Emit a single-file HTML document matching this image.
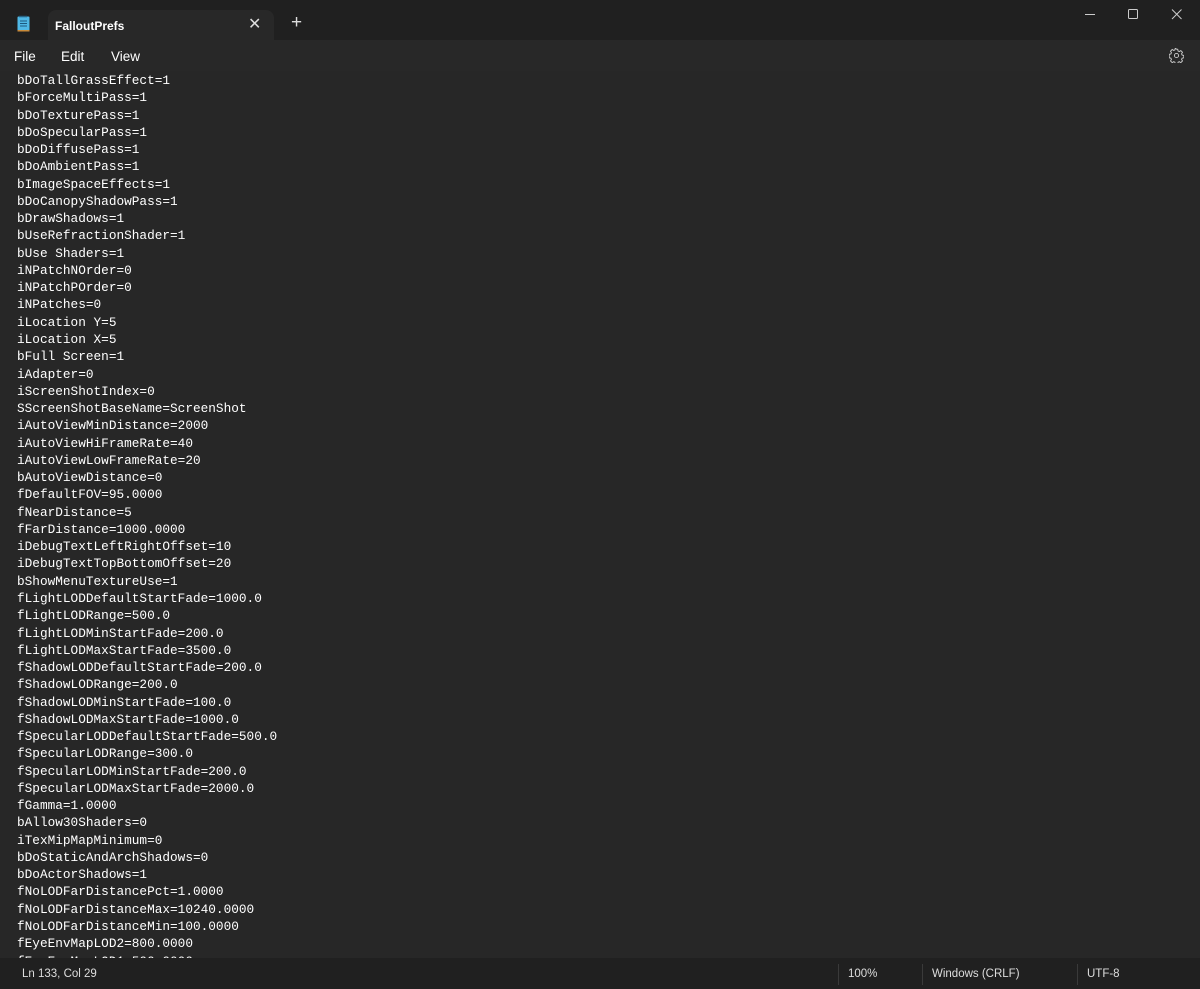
<!DOCTYPE html>
<html><head><meta charset="utf-8"><style>
*{margin:0;padding:0;box-sizing:border-box}
html,body{width:1200px;height:989px;overflow:hidden;background:#202020;font-family:"Liberation Sans",sans-serif;color:#fff}
.title{position:absolute;left:0;top:0;width:1200px;height:40px;background:#202020}
.tab{position:absolute;left:48px;top:10px;width:226px;height:30px;background:#282828;border-radius:8px 8px 0 0}
.tab .t{position:absolute;left:7px;top:9px;font-size:12px;font-weight:bold;color:#fff}
.tab .x{position:absolute;left:200px;top:4px;font-size:16px;color:#ddd}
.plus{position:absolute;left:291px;top:13px;font-size:19px;color:#ddd;line-height:1}
.menu{position:absolute;left:0;top:40px;width:1200px;height:31px;background:#282828}
.menu span{position:absolute;top:9px;font-size:13.5px;color:#fff}
.ed{position:absolute;left:0;top:71px;width:1200px;height:887px;background:#272727;overflow:hidden}
pre{position:absolute;left:17px;top:1px;font-family:"Liberation Mono",monospace;font-size:12.75px;line-height:17.26px;color:#fff}
.status{position:absolute;left:0;top:958px;width:1200px;height:31px;background:#202020;font-size:11.5px;color:#ddd}
.status span{position:absolute;top:10px}
.sep{position:absolute;top:6px;width:1px;height:21px;background:#3a3a3a}
</style></head><body>
<div class="title">
<svg style="position:absolute;left:17px;top:15px" width="13" height="17" viewBox="0 0 13 17"><rect x="0.5" y="1.5" width="12" height="15" rx="1" fill="#4fb8e6"/><rect x="0.5" y="15" width="12" height="1.5" fill="#c88a3a"/><path d="M3 0.5v2M5 0.5v2M7 0.5v2M9 0.5v2" stroke="#1d5a80"/><path d="M3 6h7M3 8.5h7M3 11h7" stroke="#1d5a80"/></svg>
<div class="tab"><span class="t">FalloutPrefs</span><span class="x">✕</span></div>
<span class="plus">+</span>
<svg style="position:absolute;left:1085px;top:9px" width="110" height="11"><path d="M0 5.5h10" stroke="#ccc"/><rect x="43.5" y="0.5" width="9" height="9" rx="1" fill="none" stroke="#ccc"/><path d="M87 0.5l9.5 9.5M96.5 0.5l-9.5 9.5" stroke="#ccc"/></svg>
</div>
<div class="menu"><span style="left:14px">File</span><span style="left:61px">Edit</span><span style="left:111px">View</span>
<svg style="position:absolute;left:1169px;top:8px" width="15" height="15" viewBox="0 0 16 16"><path d="M8 1.2l1.3.2.4 1.8 1.3.6 1.6-1 1.8 1.8-1 1.6.6 1.3 1.8.4v2.6l-1.8.4-.6 1.3 1 1.6-1.8 1.8-1.6-1-1.3.6-.4 1.8H6.7l-.4-1.8-1.3-.6-1.6 1-1.8-1.8 1-1.6-.6-1.3-1.8-.4V6.7l1.8-.4.6-1.3-1-1.6 1.8-1.8 1.6 1 1.3-.6.4-1.8z" fill="none" stroke="#ccc"/><circle cx="8" cy="8" r="2.2" fill="none" stroke="#ccc"/></svg></div>
<div class="ed"><pre>bDoTallGrassEffect=1
bForceMultiPass=1
bDoTexturePass=1
bDoSpecularPass=1
bDoDiffusePass=1
bDoAmbientPass=1
bImageSpaceEffects=1
bDoCanopyShadowPass=1
bDrawShadows=1
bUseRefractionShader=1
bUse Shaders=1
iNPatchNOrder=0
iNPatchPOrder=0
iNPatches=0
iLocation Y=5
iLocation X=5
bFull Screen=1
iAdapter=0
iScreenShotIndex=0
SScreenShotBaseName=ScreenShot
iAutoViewMinDistance=2000
iAutoViewHiFrameRate=40
iAutoViewLowFrameRate=20
bAutoViewDistance=0
fDefaultFOV=95.0000
fNearDistance=5
fFarDistance=1000.0000
iDebugTextLeftRightOffset=10
iDebugTextTopBottomOffset=20
bShowMenuTextureUse=1
fLightLODDefaultStartFade=1000.0
fLightLODRange=500.0
fLightLODMinStartFade=200.0
fLightLODMaxStartFade=3500.0
fShadowLODDefaultStartFade=200.0
fShadowLODRange=200.0
fShadowLODMinStartFade=100.0
fShadowLODMaxStartFade=1000.0
fSpecularLODDefaultStartFade=500.0
fSpecularLODRange=300.0
fSpecularLODMinStartFade=200.0
fSpecularLODMaxStartFade=2000.0
fGamma=1.0000
bAllow30Shaders=0
iTexMipMapMinimum=0
bDoStaticAndArchShadows=0
bDoActorShadows=1
fNoLODFarDistancePct=1.0000
fNoLODFarDistanceMax=10240.0000
fNoLODFarDistanceMin=100.0000
fEyeEnvMapLOD2=800.0000
fEyeEnvMapLOD1=500.0000</pre></div>
<div class="status"><span style="left:22px">Ln 133, Col 29</span>
<div class="sep" style="left:838px"></div><span style="left:848px">100%</span>
<div class="sep" style="left:922px"></div><span style="left:932px">Windows (CRLF)</span>
<div class="sep" style="left:1077px"></div><span style="left:1087px">UTF-8</span></div>
</body></html>
